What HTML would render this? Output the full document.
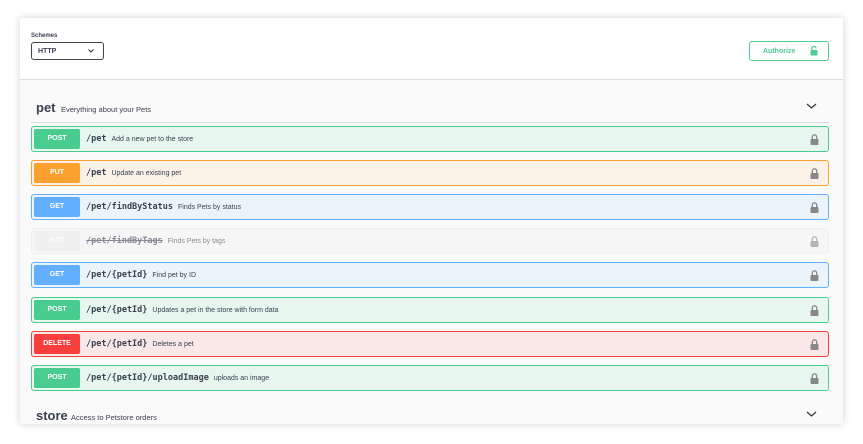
<!DOCTYPE html><html><head><style>
body{margin:0;width:863px;height:444px;background:#fff;font-family:"Liberation Sans",sans-serif;overflow:hidden;position:relative}
.card{position:absolute;left:20px;top:18px;width:823px;height:406px;background:#fafafa;box-shadow:0 0 8px rgba(0,0,0,.18);overflow:hidden;border-radius:2px}
.top{height:61px;background:#fff;border-bottom:1px solid #ddd;position:relative}
.sch{position:absolute;left:11px;top:15px;font-size:6px;font-weight:bold;color:#3b4151}
.sel{position:absolute;left:11px;top:24px;width:73px;height:18px;border:1px solid #41444e;border-radius:3px;font-size:7px;font-weight:bold;color:#3b4151;box-sizing:border-box;padding:5px 0 0 6px}
.sel svg{position:absolute;right:9px;top:6px}
.auth{position:absolute;left:729px;top:23px;width:80px;height:20px;border:1px solid #49cc90;border-radius:3px;box-sizing:border-box;font-size:7px;font-weight:bold;color:#49cc90;padding:6px 0 0 13px}
.tag{position:absolute;left:11px;top:82px;width:798px;height:22px;border-bottom:1px solid #ddd}
.tag b{font-size:13px;color:#3b4151;position:absolute;left:5px;top:0}
.tag i{font-style:normal;font-size:7.5px;color:#3b4151;position:absolute;top:5px}
.chev{position:absolute;right:12px;top:2px}
.op{position:absolute;left:11px;width:798px;height:26px;border:1px solid;border-radius:3px;box-sizing:border-box}
.m{position:absolute;left:2px;top:2px;width:46px;height:20px;border-radius:2px;color:#fff;font-size:7px;font-weight:bold;text-align:center;line-height:20px}
.p{position:absolute;left:54px;top:7px;font-family:"DejaVu Sans Mono","Liberation Mono",monospace;font-weight:bold;font-size:8.5px;color:#3b4151}
.d{font-family:"Liberation Sans",sans-serif;font-weight:normal;font-size:7px;margin-left:5px}
.lk{position:absolute;right:9px;top:7px}
.post{background:#e8f6f0;border-color:#49cc90}.post .m{background:#49cc90}
.put{background:#fbf1e6;border-color:#fca130}.put .m{background:#fca130}
.get{background:#ebf3fb;border-color:#61affe}.get .m{background:#61affe}
.del{background:#fae7e7;border-color:#f93e3e}.del .m{background:#f93e3e}
.dep{background:#f5f5f5;border-color:#ebebeb;opacity:.6}.dep .m{background:#ebebeb}
</style></head><body>
<div class="card">
<div class="top"><div class="sch">Schemes</div><div class="sel">HTTP<svg width="6" height="4" viewBox="0 0 6 4"><path d="M0.5 0.5L3 3l2.5-2.5" fill="none" stroke="#333" stroke-width="1.1"/></svg></div>
<div class="auth">Authorize<svg style="position:absolute;right:10px;top:4px" width="8" height="10" viewBox="0 0 8 10"><path d="M2 4V2.5a2 2 0 0 1 4 0" fill="none" stroke="#49cc90" stroke-width="1.2"/><rect x="0.5" y="4" width="7" height="5.5" rx="1" fill="#49cc90"/></svg></div></div>
<div class="tag"><b>pet</b><i style="left:30px">Everything about your Pets</i><svg class="chev" width="11" height="8" viewBox="0 0 11 8"><path d="M1 2l4.5 4L10 2" fill="none" stroke="#333" stroke-width="1.2"/></svg></div>
<div class="op post" style="top:108px"><div class="m">POST</div><div class="p">/pet<span class="d">Add a new pet to the store</span></div><svg class="lk" width="9" height="11" viewBox="0 0 9 11"><path d="M2.3 5V3a2.2 2.2 0 0 1 4.4 0V5" fill="none" stroke="#888" stroke-width="1.3"/><rect x="0.5" y="5" width="8" height="6" rx="1" fill="#888"/></svg></div>
<div class="op put" style="top:142px"><div class="m">PUT</div><div class="p">/pet<span class="d">Update an existing pet</span></div><svg class="lk" width="9" height="11" viewBox="0 0 9 11"><path d="M2.3 5V3a2.2 2.2 0 0 1 4.4 0V5" fill="none" stroke="#888" stroke-width="1.3"/><rect x="0.5" y="5" width="8" height="6" rx="1" fill="#888"/></svg></div>
<div class="op get" style="top:176px"><div class="m">GET</div><div class="p">/pet/findByStatus<span class="d">Finds Pets by status</span></div><svg class="lk" width="9" height="11" viewBox="0 0 9 11"><path d="M2.3 5V3a2.2 2.2 0 0 1 4.4 0V5" fill="none" stroke="#888" stroke-width="1.3"/><rect x="0.5" y="5" width="8" height="6" rx="1" fill="#888"/></svg></div>
<div class="op dep" style="top:210px"><div class="m">GET</div><div class="p"><s>/pet/findByTags</s><span class="d">Finds Pets by tags</span></div><svg class="lk" width="9" height="11" viewBox="0 0 9 11"><path d="M2.3 5V3a2.2 2.2 0 0 1 4.4 0V5" fill="none" stroke="#888" stroke-width="1.3"/><rect x="0.5" y="5" width="8" height="6" rx="1" fill="#888"/></svg></div>
<div class="op get" style="top:244px"><div class="m">GET</div><div class="p">/pet/{petId}<span class="d">Find pet by ID</span></div><svg class="lk" width="9" height="11" viewBox="0 0 9 11"><path d="M2.3 5V3a2.2 2.2 0 0 1 4.4 0V5" fill="none" stroke="#888" stroke-width="1.3"/><rect x="0.5" y="5" width="8" height="6" rx="1" fill="#888"/></svg></div>
<div class="op post" style="top:279px"><div class="m">POST</div><div class="p">/pet/{petId}<span class="d">Updates a pet in the store with form data</span></div><svg class="lk" width="9" height="11" viewBox="0 0 9 11"><path d="M2.3 5V3a2.2 2.2 0 0 1 4.4 0V5" fill="none" stroke="#888" stroke-width="1.3"/><rect x="0.5" y="5" width="8" height="6" rx="1" fill="#888"/></svg></div>
<div class="op del" style="top:313px"><div class="m">DELETE</div><div class="p">/pet/{petId}<span class="d">Deletes a pet</span></div><svg class="lk" width="9" height="11" viewBox="0 0 9 11"><path d="M2.3 5V3a2.2 2.2 0 0 1 4.4 0V5" fill="none" stroke="#888" stroke-width="1.3"/><rect x="0.5" y="5" width="8" height="6" rx="1" fill="#888"/></svg></div>
<div class="op post" style="top:347px"><div class="m">POST</div><div class="p">/pet/{petId}/uploadImage<span class="d">uploads an image</span></div><svg class="lk" width="9" height="11" viewBox="0 0 9 11"><path d="M2.3 5V3a2.2 2.2 0 0 1 4.4 0V5" fill="none" stroke="#888" stroke-width="1.3"/><rect x="0.5" y="5" width="8" height="6" rx="1" fill="#888"/></svg></div>
<div class="tag" style="top:390px;border:none"><b>store</b><i style="left:40px">Access to Petstore orders</i><svg class="chev" width="11" height="8" viewBox="0 0 11 8"><path d="M1 2l4.5 4L10 2" fill="none" stroke="#333" stroke-width="1.2"/></svg></div>
</div>
</body></html>
